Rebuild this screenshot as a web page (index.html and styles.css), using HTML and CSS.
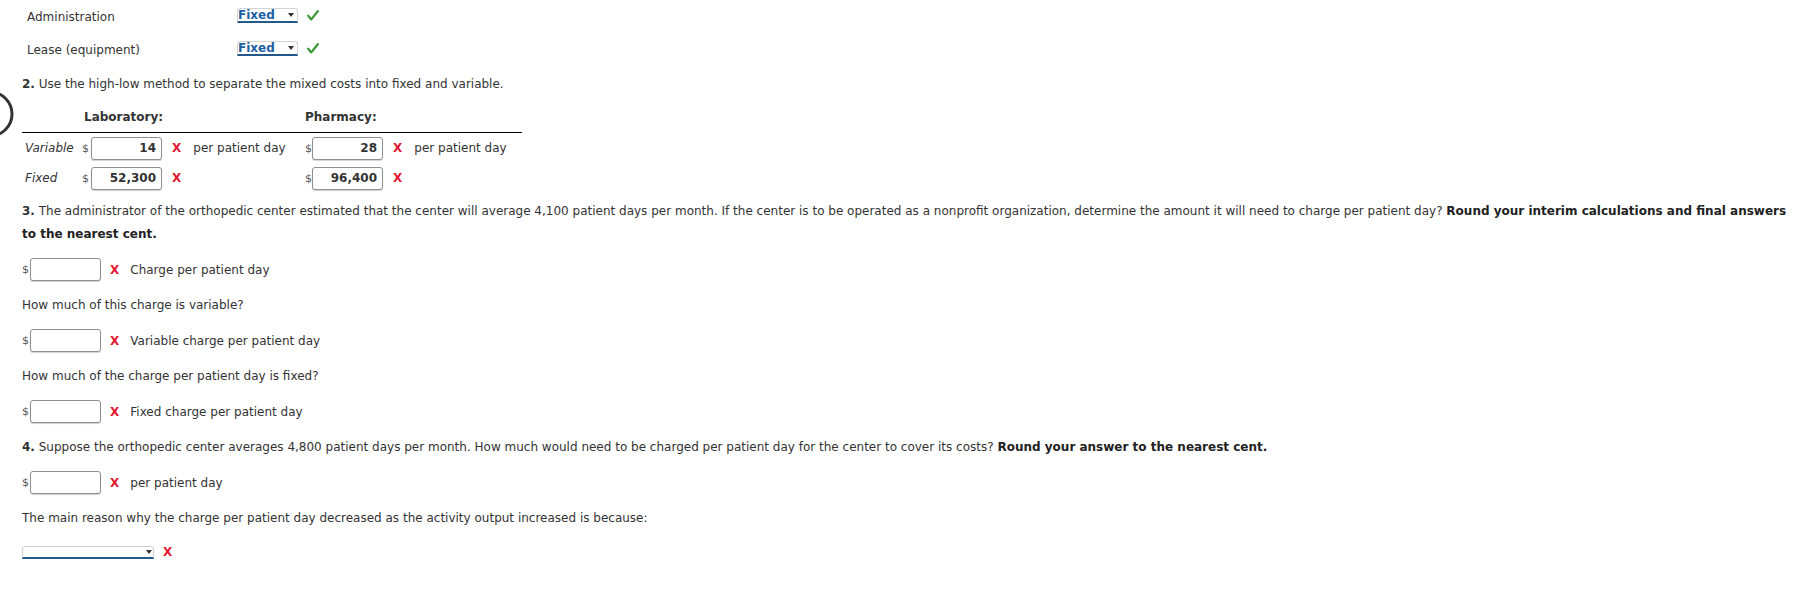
FILE: index.html
```html
<!DOCTYPE html>
<html lang="en">
<head>
<meta charset="utf-8">
<title>High-low method</title>
<link rel="stylesheet" href="styles.css">
</head>
<body>
<div class="page">
  <svg class="marker" width="60" height="60" viewBox="0 0 60 60" aria-hidden="true"><circle cx="30" cy="30" r="22" fill="none" stroke="#333" stroke-width="3"/></svg>

  <div class="class-row">
    <span class="class-label">Administration</span>
    <span class="select"><span class="sel-text">Fixed</span><span class="sel-arrow"></span></span>
    <svg class="check" width="12" height="11" viewBox="0 0 12 11" aria-hidden="true"><path d="M1.2 5.8 L4.3 9.4 L10.8 1.2" fill="none" stroke="#3f9a3a" stroke-width="2.3" stroke-linecap="round" stroke-linejoin="round"/></svg>
  </div>
  <div class="class-row">
    <span class="class-label">Lease (equipment)</span>
    <span class="select"><span class="sel-text">Fixed</span><span class="sel-arrow"></span></span>
    <svg class="check" width="12" height="11" viewBox="0 0 12 11" aria-hidden="true"><path d="M1.2 5.8 L4.3 9.4 L10.8 1.2" fill="none" stroke="#3f9a3a" stroke-width="2.3" stroke-linecap="round" stroke-linejoin="round"/></svg>
  </div>

  <div class="q-line"><b>2.</b>&nbsp;Use the high-low method to separate the mixed costs into fixed and variable.</div>

  <div class="cost-table">
    <div class="cost-head">
      <span></span>
      <span>Laboratory:</span>
      <span>Pharmacy:</span>
    </div>
    <div class="cost-row">
      <span class="row-label">Variable</span>
      <span class="cell"><span class="dollar">$</span><span class="box">14</span><span class="xmark">X</span><span class="unit">per patient day</span></span>
      <span class="cell alt"><span class="dollar">$</span><span class="box">28</span><span class="xmark">X</span><span class="unit">per patient day</span></span>
    </div>
    <div class="cost-row">
      <span class="row-label">Fixed</span>
      <span class="cell"><span class="dollar">$</span><span class="box">52,300</span><span class="xmark">X</span></span>
      <span class="cell alt"><span class="dollar">$</span><span class="box">96,400</span><span class="xmark">X</span></span>
    </div>
  </div>

  <p class="q-para"><b>3.</b> The administrator of the orthopedic center estimated that the center will average 4,100 patient days per month. If the center is to be operated as a nonprofit organization, determine the amount it will need to charge per patient day? <b class="strong">Round your interim calculations and final answers</b> <b class="strong">to the nearest cent.</b></p>

  <div class="answers">
    <div class="a-row"><span class="dollar">$</span><span class="box"></span><span class="xmark">X</span><span class="unit">Charge per patient day</span></div>
    <div class="a-row">How much of this charge is variable?</div>
    <div class="a-row"><span class="dollar">$</span><span class="box"></span><span class="xmark">X</span><span class="unit">Variable charge per patient day</span></div>
    <div class="a-row">How much of the charge per patient day is fixed?</div>
    <div class="a-row"><span class="dollar">$</span><span class="box"></span><span class="xmark">X</span><span class="unit">Fixed charge per patient day</span></div>
    <div class="a-row"><span><b>4.</b> Suppose the orthopedic center averages 4,800 patient days per month. How much would need to be charged per patient day for the center to cover its costs? <b class="strong">Round your answer to the nearest cent.</b></span></div>
    <div class="a-row"><span class="dollar">$</span><span class="box"></span><span class="xmark">X</span><span class="unit">per patient day</span></div>
    <div class="a-row">The main reason why the charge per patient day decreased as the activity output increased is because:</div>
    <div class="a-row short"><span class="dropdown"><span class="sel-arrow"></span></span><span class="xmark">X</span></div>
  </div>
</div>
</body>
</html>
```
FILE: styles.css
```css
* { box-sizing: border-box; }
html, body { background: #fff; }
body {
  margin: 0;
  font-family: "DejaVu Sans", Verdana, sans-serif;
  font-size: 12px;
  color: #333;
}
.page {
  position: relative;
  padding: 0 8px 0 22px;
  height: 590px;
}
.marker {
  position: absolute;
  left: -40px;
  top: 84px;
}

/* classification rows */
.class-row {
  height: 33px;
  display: flex;
  align-items: center;
}
.class-label {
  width: 215px;
  padding-left: 5px;
}
.select {
  display: inline-flex;
  align-items: center;
  justify-content: space-between;
  width: 61px;
  height: 15px;
  margin-top: -3px;
  background: #fff;
  border: 1px solid #d4d4d4;
  border-bottom: 2px solid #22598a;
  border-radius: 3px 3px 0 0;
}
.sel-text {
  color: #1d5fa4;
  font-weight: bold;
  font-size: 12px;
  line-height: 12px;
}
.sel-arrow {
  width: 0;
  height: 0;
  margin-right: 3px;
  border-left: 3px solid transparent;
  border-right: 3px solid transparent;
  border-top: 4px solid #333;
}
.check {
  margin-left: 9px;
  margin-top: -3px;
}

/* question lines */
.q-line {
  height: 35px;
  display: flex;
  align-items: center;
}
b { font-weight: bold; color: #333; }
.strong { color: #222; }

/* table */
.cost-table {
  width: 500px;
}
.cost-head {
  display: grid;
  grid-template-columns: 62px 221px 1fr;
  align-items: center;
  height: 32px;
  border-bottom: 1px solid #000;
  font-weight: bold;
}
.cost-row {
  display: grid;
  grid-template-columns: 60px 223px 1fr;
  align-items: center;
  height: 30px;
}
.row-label {
  font-style: italic;
  padding-left: 3px;
}
.cell {
  display: flex;
  align-items: center;
}
.dollar {
  color: #555;
  font-size: 11px;
}
.box {
  display: inline-block;
  width: 71px;
  height: 23px;
  margin-left: 2px;
  padding-right: 5px;
  border: 1px solid #8f8f8f;
  border-radius: 3px;
  box-shadow: 0 1px 1px rgba(0,0,0,0.18);
  background: #fff;
  text-align: right;
  font-weight: bold;
  line-height: 21px;
  color: #333;
}
.cell.alt .box { margin-left: 0; }
.xmark {
  margin-left: 10px;
  color: #e2162e;
  font-weight: bold;
  font-size: 12px;
}
.unit {
  margin-left: 12px;
}

/* paragraph 3 */
.q-para {
  margin: 7px 0 0;
  line-height: 23px;
}

/* answers */
.answers {
  margin-top: 6px;
}
.a-row {
  height: 35.5px;
  display: flex;
  align-items: center;
}
.a-row .box { margin-left: 1px; }
.a-row .xmark { margin-left: 9px; }
.a-row .unit { margin-left: 11px; }
.a-row.short { height: 32px; }
.dropdown {
  display: inline-flex;
  align-items: center;
  justify-content: flex-end;
  width: 132px;
  height: 13px;
  background: #fff;
  border: 1px solid #d0d0d0;
  border-bottom: 2px solid #22598a;
  border-radius: 4px 4px 0 0;
}
.dropdown .sel-arrow { margin-right: 1px; }
```
